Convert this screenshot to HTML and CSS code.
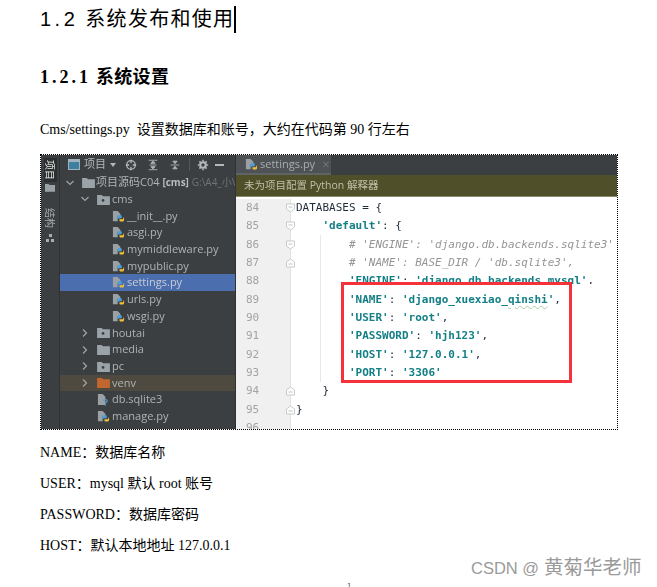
FILE: index.html
```html
<!DOCTYPE html>
<html lang="zh">
<head>
<meta charset="utf-8">
<title>系统发布和使用</title>
<link rel="stylesheet" href="styles.css">
</head>
<body>
<svg class="defs" width="0" height="0" aria-hidden="true">
  <symbol id="py" viewBox="0 0 14 14">
    <path d="M1 1h5l3 3v3H6v5H1z" fill="#9aa0a4"/>
    <path d="M6 7.500c0-1.400.8-2 2-2h1c1 0 1.500.6 1.500 1.500V9H8.200c-1 0-1.800.6-1.800 1.600V12H6z" fill="#4f9fd6"/>
    <path d="M13 8v2.500c0 1.300-.8 2-2 2H9.500c-1 0-1.500-.6-1.500-1.500V10h3c1 0 1.300-.8 1.300-2z" fill="#f2c037"/>
  </symbol>
  <symbol id="folder" viewBox="0 0 14 12">
    <path d="M0 1h5l1.500 1.500H14V12H0z" fill="#9aa3a8"/>
  </symbol>
  <symbol id="pkg" viewBox="0 0 14 12">
    <path d="M0 1h5l1.500 1.500H14V12H0z" fill="#9aa3a8"/>
    <circle cx="6.500" cy="7" r="1.500" fill="#3c3f41"/>
  </symbol>
  <symbol id="venv" viewBox="0 0 14 12">
    <path d="M0 1h5l1.500 1.500H14V12H0z" fill="#c2662f"/>
  </symbol>
  <symbol id="db" viewBox="0 0 14 14">
    <path d="M1 1h5l3 3v9H1z" fill="#9aa0a4"/>
    <path d="M7 8.500c.3-2 4-2 4 0 0 1.500-2 1.500-2 3" fill="none" stroke="#4f9fd6" stroke-width="1.300"/>
    <rect x="8.400" y="12.400" width="1.300" height="1.300" fill="#4f9fd6"/>
  </symbol>
  <symbol id="chev-d" viewBox="0 0 10 10"><path d="M1.500 3L5 6.500 8.500 3" fill="none" stroke="#a0a4a6" stroke-width="1.200"/></symbol>
  <symbol id="chev-r" viewBox="0 0 10 10"><path d="M3 1.500L6.500 5 3 8.500" fill="none" stroke="#a0a4a6" stroke-width="1.200"/></symbol>
  <symbol id="fold-open" viewBox="0 0 9 9"><path d="M.5.500h8v5l-4 3-4-3z" fill="#fff" stroke="#c9c9c9"/><path d="M2.500 3.500h4" stroke="#c0c0c0"/></symbol>
  <symbol id="fold-end" viewBox="0 0 9 9"><path d="M.5 8.500h8v-5l-4-3-4 3z" fill="#fff" stroke="#c9c9c9"/><path d="M2.500 5.500h4" stroke="#c0c0c0"/></symbol>
</svg>

<main class="page">
  <h1 class="title"><span class="num">1.2</span>系统发布和使用<span class="caret"></span></h1>
  <h2 class="subtitle"><span class="subnum">1.2.1</span>系统设置</h2>
  <p class="intro">Cms/settings.py&nbsp; 设置数据库和账号，大约在代码第 90 行左右</p>

  <figure class="shot">
    <div class="ide">
      <aside class="strip">
        <span class="strip-tab strip-active">项目</span>
        <svg class="strip-ico"><use href="#folder"/></svg>
        <span class="strip-tab strip-second">结构</span>
        <svg class="strip-ico2" viewBox="0 0 10 10"><path d="M4 1h3v3H4zM1 6h3v3H1zM6 6h3v3H6z" fill="#a8acae"/></svg>
      </aside>

      <section class="tree">
        <div class="toolbar">
          <span class="view-ico"></span>
          <span class="view-name">项目</span>
          <span class="tri"></span>
          <svg class="tb tb-first" viewBox="0 0 14 14"><circle cx="7" cy="7" r="5" fill="none" stroke="#b5b8ba" stroke-width="1.500"/><path d="M7 1v4M7 9v4M1 7h4M9 7h4" stroke="#b5b8ba" stroke-width="1.500"/></svg>
          <svg class="tb" viewBox="0 0 14 14"><path d="M2 1.500h10M2 12.500h10M3 7h8M7 2.500l-2.500 2.500h5zM7 11.500l-2.500-2.500h5z" stroke="#b5b8ba" fill="#b5b8ba"/></svg>
          <svg class="tb" viewBox="0 0 14 14"><path d="M2 7h10M7 5.500L4.500 2.500h5zM7 8.500l-2.500 3h5z" stroke="#b5b8ba" fill="#b5b8ba"/></svg>
          <span class="tb-sep"></span>
          <svg class="tb" viewBox="0 0 14 14"><circle cx="7" cy="7" r="3.200" fill="none" stroke="#b5b8ba" stroke-width="2.400"/><path d="M7 1v2M7 11v2M1 7h2M11 7h2M2.800 2.800l1.400 1.400M9.800 9.800l1.400 1.400M2.800 11.200l1.400-1.400M9.800 4.200l1.400-1.400" stroke="#b5b8ba" stroke-width="1.800"/></svg>
          <span class="dash"></span>
        </div>
        <ul class="files">
          <li class="row lv0"><svg class="chev"><use href="#chev-d"/></svg><svg class="dir"><use href="#folder"/></svg><span>项目源码C04 <b>[cms]</b> <i class="path">G:\A4_小\</i></span></li>
          <li class="row lv1"><svg class="chev"><use href="#chev-d"/></svg><svg class="dir"><use href="#pkg"/></svg><span>cms</span></li>
          <li class="row lv2"><svg class="file"><use href="#py"/></svg><span>__init__.py</span></li>
          <li class="row lv2"><svg class="file"><use href="#py"/></svg><span>asgi.py</span></li>
          <li class="row lv2"><svg class="file"><use href="#py"/></svg><span>mymiddleware.py</span></li>
          <li class="row lv2"><svg class="file"><use href="#py"/></svg><span>mypublic.py</span></li>
          <li class="row lv2 selected"><svg class="file"><use href="#py"/></svg><span>settings.py</span></li>
          <li class="row lv2"><svg class="file"><use href="#py"/></svg><span>urls.py</span></li>
          <li class="row lv2"><svg class="file"><use href="#py"/></svg><span>wsgi.py</span></li>
          <li class="row lv1"><svg class="chev"><use href="#chev-r"/></svg><svg class="dir"><use href="#pkg"/></svg><span>houtai</span></li>
          <li class="row lv1"><svg class="chev"><use href="#chev-r"/></svg><svg class="dir"><use href="#folder"/></svg><span>media</span></li>
          <li class="row lv1"><svg class="chev"><use href="#chev-r"/></svg><svg class="dir"><use href="#pkg"/></svg><span>pc</span></li>
          <li class="row lv1 excluded"><svg class="chev"><use href="#chev-r"/></svg><svg class="dir"><use href="#venv"/></svg><span>venv</span></li>
          <li class="row lv1b"><svg class="file"><use href="#db"/></svg><span>db.sqlite3</span></li>
          <li class="row lv1b"><svg class="file"><use href="#py"/></svg><span>manage.py</span></li>
        </ul>
      </section>

      <section class="editor">
        <div class="tabs"><div class="tab"><svg class="file"><use href="#py"/></svg><span>settings.py</span><span class="close">×</span></div></div>
        <div class="notice">未为项目配置 Python 解释器</div>
        <div class="code">
          <div class="line"><span class="gut">84<svg class="fold"><use href="#fold-open"/></svg></span><code>DATABASES = {</code></div>
          <div class="line"><span class="gut">85<svg class="fold"><use href="#fold-open"/></svg></span><code>    <b class="s">'default'</b>: {</code></div>
          <div class="line"><span class="gut">86<svg class="fold"><use href="#fold-open"/></svg></span><code class="c">        # 'ENGINE': 'django.db.backends.sqlite3'</code></div>
          <div class="line"><span class="gut">87<svg class="fold"><use href="#fold-end"/></svg></span><code class="c">        # 'NAME': BASE_DIR / 'db.sqlite3',</code></div>
          <div class="line"><span class="gut">88</span><code class="clip">        <b class="s">'ENGINE'</b>: <b class="s">'django.db.backends.mysql'</b>,</code></div>
          <div class="line"><span class="gut">89</span><code>        <b class="s">'NAME'</b>: <b class="s">'django_xuexiao_<u class="typo">qinshi</u>'</b>,</code></div>
          <div class="line"><span class="gut">90</span><code>        <b class="s">'USER'</b>: <b class="s">'root'</b>,</code></div>
          <div class="line"><span class="gut">91</span><code>        <b class="s">'PASSWORD'</b>: <b class="s">'hjh123'</b>,</code></div>
          <div class="line"><span class="gut">92</span><code>        <b class="s">'HOST'</b>: <b class="s">'127.0.0.1'</b>,</code></div>
          <div class="line"><span class="gut">93</span><code>        <b class="s">'PORT'</b>: <b class="s">'3306'</b></code></div>
          <div class="line"><span class="gut">94<svg class="fold"><use href="#fold-end"/></svg></span><code>    }</code></div>
          <div class="line"><span class="gut">95<svg class="fold"><use href="#fold-end"/></svg></span><code>}</code></div>
          <div class="line"><span class="gut">96</span><code></code></div>
          <span class="guide"></span>
        </div>
      </section>
    </div>
    <div class="redbox"></div>
  </figure>

  <p class="item">NAME：数据库名称</p>
  <p class="item">USER：mysql 默认 root 账号</p>
  <p class="item">PASSWORD：数据库密码</p>
  <p class="item">HOST：默认本地地址 127.0.0.1</p>
</main>
<div class="pageno">1</div>
<div class="watermark"><span class="wm-latin">CSDN @</span>黄菊华老师</div>
</body>
</html>
```

FILE: styles.css
```css
* { box-sizing: border-box; }
html, body { margin: 0; height: 587px; overflow: hidden; background: #fff; }
body { position: relative; font-family: "Liberation Serif", "Noto Sans CJK SC", serif; color: #000; }
.defs { position: absolute; }
.page { padding-left: 40px; width: 657px; }

.title { margin: 0; padding-top: 6px; height: 33px; font: 400 20px/27px "Liberation Sans", "Noto Sans CJK SC", sans-serif; letter-spacing: 1.300px; display: flex; align-items: center; }
.num { letter-spacing: 3.500px; margin-right: 7px; }
.caret { width: 2px; height: 27px; background: #000; margin-left: 0; }

.subtitle { margin: 31px 0 0; font: 700 18px/26px "Liberation Serif", "Noto Sans CJK SC", serif; letter-spacing: .3px; }
.subnum { letter-spacing: 3px; margin-right: 5px; }

.intro { margin: 30px 0 0; font-size: 14px; line-height: 20px; height: 20px; }

.shot { position: relative; margin: 14px 0 0 0; width: 578px; height: 276px; border: 1px dotted #000; }
.ide { display: flex; width: 100%; height: 100%; overflow: hidden; filter: blur(.35px); }

.strip { position: relative; width: 19px; flex: none; background: #3c3f41; border-right: 1px solid #2f3133; }
.strip-tab { display: block; writing-mode: vertical-rl; text-orientation: sideways; font: 10px/13px "Noto Sans CJK SC", sans-serif; color: #c4c7c9; width: 13px; margin: 0 auto; text-align: center; }
.strip-active { margin-top: 3px; height: 24px; color: #e6e6e6; background: #2c2e30; }
.strip-ico { display: block; width: 10px; height: 9px; margin: 1px auto 0; }
.strip-second { margin-top: 14px; height: 24px; color: #a8acae; }
.strip-ico2 { display: block; width: 10px; height: 10px; margin: 3px auto 0; }

.tree { width: 176px; flex: none; background: #3c3f41; color: #b0b3b5; font: 11px/16.7px "Open Sans", "Noto Sans CJK SC", sans-serif; border-right: 1px solid #2f3133; }
.toolbar { display: flex; align-items: center; height: 19px; padding-left: 8px; }
.view-ico { width: 12px; height: 11px; background: #3d7f9f; border: 1.500px solid #9fb4bf; border-top-width: 3px; }
.view-name { margin-left: 4px; font-size: 11px; color: #b5b8ba; }
.tri { width: 0; height: 0; margin-left: 4px; border: 3.500px solid transparent; border-top: 4px solid #b5b8ba; border-bottom: 0; }
.tb { width: 12px; height: 12px; flex: none; margin-left: 10px; }
.tb-first { margin-left: 9px; }
.tb-sep { width: 1px; height: 13px; background: #55585a; margin-left: 8px; margin-right: -3px; }
.dash { width: 9px; height: 2px; background: #b5b8ba; margin-left: 6px; }

.files { list-style: none; margin: 0; padding: 0; }
.row { display: flex; align-items: center; height: 16.7px; white-space: nowrap; overflow: hidden; }
.lv0 { padding-left: 5px; height: 17px; }
.lv1 { padding-left: 20px; }
.lv1b { padding-left: 37px; }
.lv2 { padding-left: 52px; }
.selected { background: #4b6eaf; color: #c8ccd6; }
.excluded { background: #4e4a3f; }
.chev { width: 10px; height: 10px; flex: none; margin-right: 7px; }
.dir { width: 13px; height: 11px; flex: none; margin-right: 2px; }
.lv0 .dir { margin-right: 1px; }
.file { width: 13px; height: 13px; flex: none; margin-right: 2px; }
.lv0 b { font-weight: 700; color: #b8bbbd; font-size: 10px; }
.lv0 .path { font-style: normal; color: #6f7476; font-size: 10px; }

.editor { flex: 1; min-width: 0; background: #fff; }
.tabs { height: 20px; background: #3c3f41; }
.tab { display: inline-flex; align-items: center; height: 20px; width: 95px; padding-left: 9px; background: #4e5254; border-bottom: 2px solid #5f6467; color: #a9adaf; font: 11px/16px "Open Sans", sans-serif; }
.close { margin-left: 7px; color: #74787b; font-size: 13px; }
.notice { height: 22px; padding-left: 8px; background: #4f4f29; border-bottom: 1px solid #8c8c6a; color: #bfc0a8; font: 10.500px/21px "Open Sans", "Noto Sans CJK SC", sans-serif; }

.code { position: relative; height: 234px; overflow: hidden; padding-top: 2px; }
.line { display: flex; height: 18.350px; align-items: center; }
.gut { position: relative; flex: none; width: 55px; height: 100%; padding-left: 10px; background: #f0f0f0; border-right: 1px solid #e3e3e3; color: #a3a3a3; font: 11px/18.350px "DejaVu Sans Mono", monospace; }
.fold { position: absolute; right: -5px; top: 4px; width: 9px; height: 10px; }
code { display: block; margin-left: 5px; white-space: pre; font: 11px/18.350px "DejaVu Sans Mono", monospace; color: #1f2a3a; }
.c { color: #959595; font-style: italic; }
.s { color: #137f86; font-weight: 700; }
.typo { text-decoration: underline wavy #a9cfa9 1px; text-underline-offset: 2px; }
.clip { height: 12px; overflow: hidden; align-self: flex-start; }
.guide { position: absolute; left: 84px; top: 38px; width: 1px; height: 147px; background: #e8e8e8; }

.redbox { position: absolute; left: 300px; top: 127px; width: 231px; height: 101px; border: 3px solid #f5323a; }

.item { margin: 0; height: 31px; font-size: 14px; line-height: 20px; }
.shot + .item { margin-top: 13px; }

.pageno { position: absolute; left: 347px; top: 581px; font: 8px/10px "Liberation Sans", sans-serif; color: #555; }
.watermark { position: absolute; left: 471px; top: 555px; font: 19.500px/24px "Liberation Sans", "Noto Sans CJK SC", sans-serif; color: #9a9a9a; white-space: nowrap; }
.wm-latin { font-size: 16.500px; margin-right: 5px; }
```
